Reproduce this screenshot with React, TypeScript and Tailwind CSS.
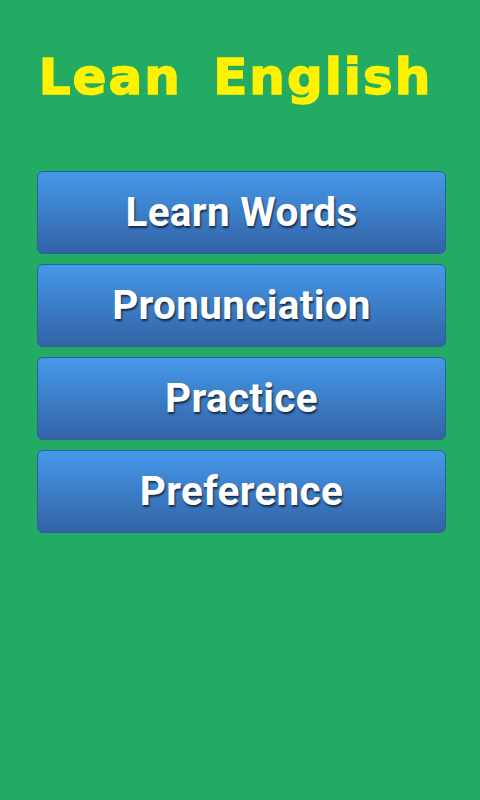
import React from "react";

const items = ["Learn Words", "Pronunciation", "Practice", "Preference"];

const App: React.FC = () => {
  return (
    <div className="w-[480px] h-[800px] bg-[#23ab64] flex flex-col">
      {/* Title */}
      <div className="h-[171px] pt-[45px] pl-[37px]">
        <h1
          className="w-[397px] text-center text-[#fff200] text-[50px] leading-[64px] font-bold tracking-[2px] [word-spacing:12px] whitespace-nowrap [-webkit-text-stroke:1.5px_#fff200]"
          style={{ fontFamily: '"DejaVu Sans", "Liberation Sans", sans-serif' }}
        >
          Lean English
        </h1>
      </div>

      {/* Menu buttons */}
      <div className="flex flex-col gap-[10px] pl-[37px]">
        {items.map((label) => (
          <button
            key={label}
            className="h-[83px] w-[409px] rounded-[6px] border border-[#2f5e9a] bg-gradient-to-b from-[#4599ea] to-[#3363a6] text-white text-[40.5px] font-bold tracking-[0.3px] [text-shadow:1px_2px_2px_rgba(0,0,0,0.65)]"
            style={{ fontFamily: "Roboto, 'Liberation Sans', sans-serif" }}
          >
            {label}
          </button>
        ))}
      </div>
    </div>
  );
};

export default App;
